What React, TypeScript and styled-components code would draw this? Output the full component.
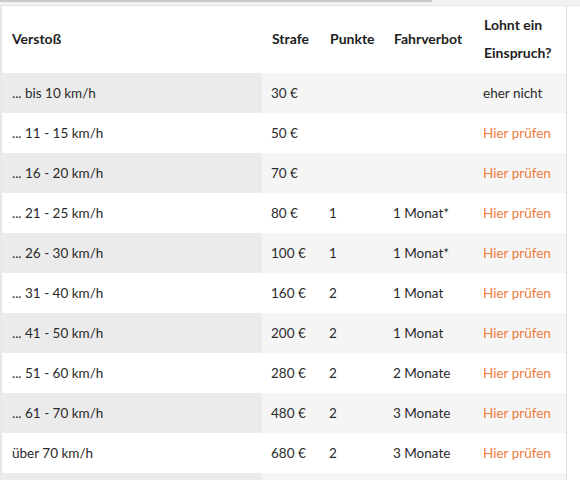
import styled, { createGlobalStyle } from "styled-components";

const GlobalStyle = createGlobalStyle`
  html, body {
    margin: 0;
    padding: 0;
    background: #ffffff;
    font-family: Lato, "Open Sans", "Liberation Sans", sans-serif;
  }
`;

const Page = styled.div`
  width: 580px;
  height: 480px;
  overflow: hidden;
`;

const TopStrip = styled.div`
  height: 6px;
  background: #f1f1f1;
  border-bottom: 1px solid #e6e6e6;
  box-sizing: border-box;
`;

const Thumb = styled.div`
  width: 432px;
  height: 2px;
  background: #c9c9c9;
`;

const Frame = styled.div`
  width: 564px;
  border-left: 2px solid #e8e8e8;
  border-right: 1px solid #dcdcdc;
`;

const Table = styled.table`
  width: 100%;
  border-collapse: collapse;
  table-layout: fixed;
  font-size: 13.5px;
  color: #2a2a2a;
`;

const HeadCell = styled.th`
  text-align: left;
  font-size: 14px;
  font-weight: 700;
  line-height: 28px;
  padding: 5px 10px 6px;
  color: #1e1e1e;
  vertical-align: middle;
`;

const Row = styled.tr<{ $striped: boolean }>`
  background: ${({ $striped }) => ($striped ? "#f5f5f5" : "#ffffff")};
`;

const Cell = styled.td`
  line-height: 28px;
  padding: 6px 10px 6px 9px;
  white-space: nowrap;
`;

const FirstCell = styled(Cell)<{ $striped: boolean }>`
  padding-left: 10px;
  background: ${({ $striped }) => ($striped ? "#ebebeb" : "transparent")};
`;

const CheckLink = styled.a`
  color: #f07c3b;
  text-decoration: none;
`;

type Rule = {
  label: string;
  fine: string;
  points: string;
  ban: string;
  worth: boolean;
};

const rules: Rule[] = [
  { label: "... bis 10 km/h", fine: "30 €", points: "", ban: "", worth: false },
  { label: "... 11 - 15 km/h", fine: "50 €", points: "", ban: "", worth: true },
  { label: "... 16 - 20 km/h", fine: "70 €", points: "", ban: "", worth: true },
  { label: "... 21 - 25 km/h", fine: "80 €", points: "1", ban: "1 Monat*", worth: true },
  { label: "... 26 - 30 km/h", fine: "100 €", points: "1", ban: "1 Monat*", worth: true },
  { label: "... 31 - 40 km/h", fine: "160 €", points: "2", ban: "1 Monat", worth: true },
  { label: "... 41 - 50 km/h", fine: "200 €", points: "2", ban: "1 Monat", worth: true },
  { label: "... 51 - 60 km/h", fine: "280 €", points: "2", ban: "2 Monate", worth: true },
  { label: "... 61 - 70 km/h", fine: "480 €", points: "2", ban: "3 Monate", worth: true },
  { label: "über 70 km/h", fine: "680 €", points: "2", ban: "3 Monate", worth: true },
  { label: "", fine: "", points: "", ban: "", worth: false },
];

export default function App() {
  return (
    <Page>
      <GlobalStyle />
      <TopStrip>
        <Thumb />
      </TopStrip>
      <Frame>
        <Table>
          <colgroup>
            <col style={{ width: 260 }} />
            <col style={{ width: 58 }} />
            <col style={{ width: 64 }} />
            <col style={{ width: 90 }} />
            <col style={{ width: 92 }} />
          </colgroup>
          <thead>
            <tr>
              <HeadCell>Verstoß</HeadCell>
              <HeadCell>Strafe</HeadCell>
              <HeadCell>Punkte</HeadCell>
              <HeadCell>Fahrverbot</HeadCell>
              <HeadCell>
                Lohnt ein
                <br />
                Einspruch?
              </HeadCell>
            </tr>
          </thead>
          <tbody>
            {rules.map((r, i) => {
              const striped = i % 2 === 0;
              return (
                <Row key={i} $striped={striped}>
                  <FirstCell $striped={striped}>{r.label}</FirstCell>
                  <Cell>{r.fine}</Cell>
                  <Cell>{r.points}</Cell>
                  <Cell>{r.ban}</Cell>
                  <Cell>
                    {r.label === "" ? "" : r.worth ? (
                      <CheckLink href="#">Hier prüfen</CheckLink>
                    ) : (
                      "eher nicht"
                    )}
                  </Cell>
                </Row>
              );
            })}
          </tbody>
        </Table>
      </Frame>
    </Page>
  );
}
